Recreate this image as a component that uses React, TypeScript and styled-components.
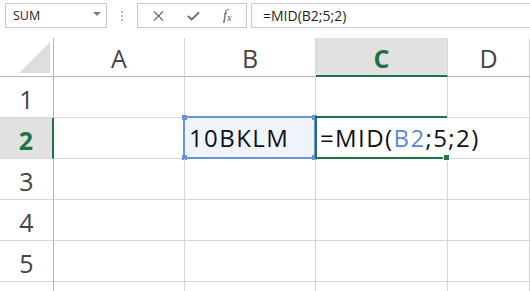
import React from "react"
import styled, { createGlobalStyle, css } from "styled-components"

const GlobalStyle = createGlobalStyle`
  html, body {
    margin: 0;
    padding: 0;
    background: #ffffff;
    overflow: hidden;
  }
  body {
    font-family: "Open Sans", "Noto Sans", sans-serif;
  }
`

const GREEN = "#217346"
const REF_BLUE = "#6b92dc"

const columns = ["A", "B", "C", "D"]
const rows = [1, 2, 3, 4, 5]
const activeCol = "C"
const activeRow = 2

export default function App() {
  return (
    <>
      <GlobalStyle />
      <Page>
        <Toolbar>
          <NameBox>
            <span>SUM</span>
            <DropArrow />
          </NameBox>
          <Grip>
            <i />
            <i />
            <i />
          </Grip>
          <ButtonGroup>
            <IconButton>
              <svg width='11' height='10' viewBox='0 0 11 10'>
                <path d='M1 0.5 L10 9.5 M10 0.5 L1 9.5' stroke='#6f6f6f' strokeWidth='1.3' fill='none' />
              </svg>
            </IconButton>
            <IconButton>
              <svg width='14' height='10' viewBox='0 0 14 10'>
                <path d='M1 5 L5 8.8 L13 1' stroke='#6f6f6f' strokeWidth='2' fill='none' />
              </svg>
            </IconButton>
            <FxLabel>
              f<sub>x</sub>
            </FxLabel>
          </ButtonGroup>
          <FormulaInput>=MID(B2;5;2)</FormulaInput>
        </Toolbar>

        <Sheet>
          <Corner>
            <svg width='31' height='31' viewBox='0 0 31 31'>
              <polygon points='31,0 31,31 0,31' fill='#dedede' />
            </svg>
          </Corner>
          {columns.map((c) => (
            <ColHeader key={c} $active={c === activeCol}>
              {c}
            </ColHeader>
          ))}
          {rows.map((r) => (
            <React.Fragment key={r}>
              <RowHeader $active={r === activeRow}>{r}</RowHeader>
              {columns.map((c) => {
                if (r === 2 && c === "B") {
                  return (
                    <Cell key={c}>
                      <RefBox>
                        <Handle $pos='tl' />
                        <Handle $pos='tr' />
                        <Handle $pos='bl' />
                        <Handle $pos='br' />
                      </RefBox>
                      <CellText>10BKLM</CellText>
                    </Cell>
                  )
                }
                if (r === 2 && c === "C") {
                  return (
                    <Cell key={c} $overflow>
                      <ActiveBox>
                        <FillHandle />
                      </ActiveBox>
                      <CellText>
                        =MID(<RefText>B2</RefText>;5;2)
                      </CellText>
                    </Cell>
                  )
                }
                return <Cell key={c} />
              })}
            </React.Fragment>
          ))}
          {/* next row, only its top sliver is on screen */}
          <RowHeader />
          {columns.map((c) => (
            <Cell key={c} />
          ))}
        </Sheet>
      </Page>
    </>
  )
}

const Page = styled.div`
  width: 530px;
  height: 291px;
  overflow: hidden;
  background: #fff;
`

const Toolbar = styled.div`
  display: flex;
  align-items: flex-start;
  height: 38px;
  padding: 3px 0 0 5px;
  box-sizing: border-box;
`

const boxed = css`
  height: 25px;
  box-sizing: border-box;
  border: 1px solid #c8c8c8;
  background: #fff;
`

const NameBox = styled.div`
  ${boxed};
  width: 102px;
  display: flex;
  align-items: center;
  justify-content: space-between;
  padding: 0 5px 0 7px;
  font-size: 12.5px;
  color: #262626;
`

const DropArrow = styled.span`
  width: 0;
  height: 0;
  border-left: 4px solid transparent;
  border-right: 4px solid transparent;
  border-top: 4px solid #7a7a7a;
  margin-bottom: 3px;
`

const Grip = styled.div`
  display: flex;
  flex-direction: column;
  gap: 2px;
  margin: 8px 14px 0 14px;

  i {
    display: block;
    width: 2px;
    height: 2px;
    background: #b8b8b8;
  }
`

const ButtonGroup = styled.div`
  ${boxed};
  width: 110px;
  display: flex;
  align-items: center;
  padding-left: 14px;
  gap: 22px;
`

const IconButton = styled.span`
  display: flex;
  align-items: center;
  justify-content: center;
  width: 13px;
`

const FxLabel = styled.span`
  font-family: "Liberation Serif", "DejaVu Serif", serif;
  font-style: italic;
  font-size: 14px;
  color: #555;
  margin-left: 1px;

  sub {
    font-size: 10px;
    vertical-align: -1px;
  }
`

const FormulaInput = styled.div`
  ${boxed};
  flex: 1;
  margin-left: 4px;
  border-right: none;
  display: flex;
  align-items: center;
  padding-left: 11px;
  font-size: 14px;
  color: #1e1e1e;
`

const Sheet = styled.div`
  display: grid;
  grid-template-columns: 54px 131px 131px 132px 1fr;
  grid-template-rows: 39px repeat(6, 41px);
`

const Corner = styled.div`
  box-sizing: border-box;
  border-right: 1px solid #b4b4b4;
  border-bottom: 1px solid #b4b4b4;
  display: flex;
  align-items: flex-end;
  justify-content: flex-end;
  padding: 0 3px 3px 0;
`

const ColHeader = styled.div<{ $active?: boolean }>`
  box-sizing: border-box;
  border-right: 1px solid #d6d6d6;
  border-bottom: ${(p) => (p.$active ? `2px solid ${GREEN}` : "1px solid #b4b4b4")};
  background: ${(p) => (p.$active ? "#e1e1e1" : "#fff")};
  color: ${(p) => (p.$active ? GREEN : "#444")};
  font-weight: ${(p) => (p.$active ? 700 : 400)};
  font-size: 25px;
  display: flex;
  align-items: center;
  justify-content: center;
  padding-top: 2px;
`

const RowHeader = styled.div<{ $active?: boolean }>`
  box-sizing: border-box;
  border-right: ${(p) => (p.$active ? `2px solid ${GREEN}` : "1px solid #b4b4b4")};
  border-bottom: 1px solid #d6d6d6;
  background: ${(p) => (p.$active ? "#e1e1e1" : "#fff")};
  color: ${(p) => (p.$active ? GREEN : "#444")};
  font-weight: ${(p) => (p.$active ? 700 : 400)};
  font-size: 25px;
  display: flex;
  align-items: center;
  justify-content: center;
  padding-top: 4px;
`

const Cell = styled.div<{ $overflow?: boolean }>`
  position: relative;
  box-sizing: border-box;
  border-right: 1px solid ${(p) => (p.$overflow ? "transparent" : "#d6d6d6")};
  border-bottom: 1px solid #d6d6d6;
  display: flex;
  align-items: flex-end;
  padding: 0 0 5px 4px;
  white-space: nowrap;
  overflow: visible;
  z-index: ${(p) => (p.$overflow ? 2 : "auto")};
`

const CellText = styled.span`
  position: relative;
  font-size: 24px;
  letter-spacing: 1.4px;
  line-height: 30px;
  color: #111;
`

const RefText = styled.span`
  color: #5b8be0;
`

const RefBox = styled.div`
  position: absolute;
  top: -2px;
  left: -2px;
  right: -1px;
  bottom: -1px;
  border: 2px solid ${REF_BLUE};
  background: #eef3fc;
`

const Handle = styled.span<{ $pos: "tl" | "tr" | "bl" | "br" }>`
  position: absolute;
  width: 5px;
  height: 5px;
  background: ${REF_BLUE};
  ${(p) => (p.$pos[0] === "t" ? "top: -3px;" : "bottom: -3px;")}
  ${(p) => (p.$pos[1] === "l" ? "left: -3px;" : "right: -3px;")}
`

const ActiveBox = styled.div`
  position: absolute;
  top: -2px;
  left: -1px;
  right: 0;
  bottom: -1px;
  border: 2px solid ${GREEN};
  border-right: none;
`

const FillHandle = styled.span`
  position: absolute;
  right: -3px;
  bottom: -4px;
  width: 5px;
  height: 5px;
  background: ${GREEN};
  border: 1px solid #fff;
`
